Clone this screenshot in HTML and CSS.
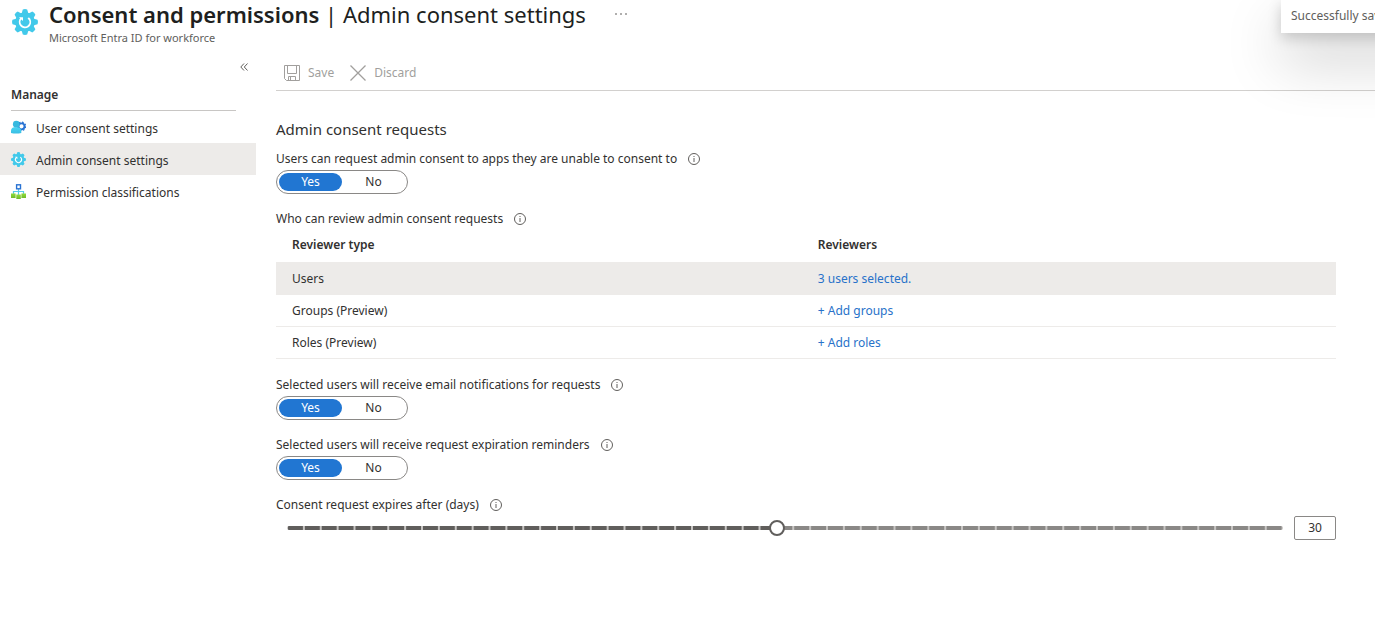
FILE: index.html
```html
<!DOCTYPE html>
<html lang="en">
<head>
<meta charset="utf-8">
<meta name="viewport" content="width=device-width, initial-scale=1">
<title>Consent and permissions | Admin consent settings</title>
<link rel="stylesheet" href="styles.css">
</head>
<body>
<svg class="defs" aria-hidden="true">
  <defs>
    <linearGradient id="cyan" x1="0" y1="0" x2="0" y2="1"><stop offset="0" stop-color="#48d5f3"/><stop offset="1" stop-color="#3abde3"/></linearGradient>
    <linearGradient id="green" x1="0" y1="0" x2="0" y2="1"><stop offset="0" stop-color="#92dc3a"/><stop offset="1" stop-color="#6fbb2b"/></linearGradient>
    <symbol id="gear" viewBox="0 0 26 26">
      <g fill="#42c9ea">
        <circle cx="13" cy="13" r="9.8"/>
        <path d="M9.500 5 10.800.5Q13-.4 15.200.5L16.500 5V21L15.200 25.500Q13 26.400 10.800 25.500L9.500 21Z"/>
        <path d="M5 9.500.5 10.800Q-.4 13 .5 15.200L5 16.500H21L25.500 15.200Q26.400 13 25.500 10.800L21 9.500Z"/>
        <path d="M9.500 5 10.800.5Q13-.4 15.200.5L16.500 5V21L15.200 25.500Q13 26.400 10.800 25.500L9.500 21Z" transform="rotate(45 13 13)"/>
        <path d="M9.500 5 10.800.5Q13-.4 15.200.5L16.500 5V21L15.200 25.500Q13 26.400 10.800 25.500L9.500 21Z" transform="rotate(-45 13 13)"/>
      </g>
      <path d="M9.300 9.200A5.300 5.300 0 1 0 17.600 10.400L16.200 9" fill="none" stroke="#fff" stroke-width="1.800"/>
      <path d="M7 8.200H11V12Z" fill="#fff"/>
    </symbol>
    <symbol id="info" viewBox="0 0 12 12">
      <circle cx="6" cy="6" r="5.500" fill="none" stroke="#605e5c"/>
      <path d="M6 5V9M6 3V4" stroke="#605e5c"/>
    </symbol>
  </defs>
</svg>
<div class="blade">
  <header class="blade-header">
    <svg class="blade-icon" aria-hidden="true"><use href="#gear"/></svg>
    <div class="blade-titles">
      <div class="title-row">
        <h1 class="title"><strong>Consent and permissions</strong> | Admin consent settings</h1>
        <button class="more" type="button" aria-label="More"><svg viewBox="0 0 12 4"><path d="M0 2h2M5 2h2M10 2h2" stroke="#605e5c"/></svg></button>
      </div>
      <p class="subtitle">Microsoft Entra ID for workforce</p>
    </div>
  </header>

  <div class="blade-body">
    <nav class="sidebar" aria-label="Manage">
      <button class="collapse" type="button" aria-label="Collapse menu"><svg viewBox="0 0 8 8"><path d="M4 .5.8 4 4 7.500M7.500.5 4.300 4 7.500 7.500" fill="none" stroke="#605e5c"/></svg></button>
      <h2 class="nav-heading">Manage</h2>
      <ul class="nav-list">
        <li><a class="nav-link" href="#user">
          <svg class="nav-icon" viewBox="0 0 15 15"><circle cx="10.500" cy="6.300" r="3" fill="none" stroke="#2872d3" stroke-width="1.800"/><circle cx="10.500" cy="6.300" r="4.200" fill="none" stroke="#2872d3" stroke-width="1.200" stroke-dasharray="1.700 1.600"/><path d="M0 13V10.500Q.3 7.400 3.300 7.200H7Q10 7.400 10.300 10.500V13Q5 14.200 0 13Z" fill="url(#cyan)"/><circle cx="5.300" cy="4.200" r="3.400" fill="#36b9df"/></svg>
          User consent settings</a></li>
        <li><a class="nav-link current" href="#admin" aria-current="page">
          <svg class="nav-icon"><use href="#gear"/></svg>
          Admin consent settings</a></li>
        <li><a class="nav-link" href="#classifications">
          <svg class="nav-icon" viewBox="0 0 15 15"><path d="M7.500 5V11M2.500 11V7.500H12.500V11" fill="none" stroke="#54cbea" stroke-width="1.200"/><rect x="5.600" y=".8" width="3.900" height="4" fill="#fff" stroke="#2872d3" stroke-width="1.400"/><g fill="url(#green)"><rect x="0" y="9.500" width="4.600" height="4.500"/><rect x="5.300" y="10.500" width="4.500" height="4.500"/><rect x="10.400" y="9.500" width="4.600" height="4.500"/></g></svg>
          Permission classifications</a></li>
      </ul>
    </nav>

    <main class="content">
      <div class="commands">
        <button class="command" type="button" disabled>
          <svg viewBox="0 0 16 16" fill="none" stroke="#a19f9d"><path d="M.5.5H15.500V15.500H2.500L.5 13.500ZM3.500.5V8.500H12.500V.5M4.500 15V11.500H11.500V15M6.500 12V15"/></svg>Save</button>
        <button class="command" type="button" disabled>
          <svg viewBox="0 0 16 16" fill="none" stroke="#a19f9d" stroke-width="1.300"><path d="M.5.5 15.500 15.500M15.500.5.5 15.500"/></svg>Discard</button>
      </div>

      <form class="settings">
        <h2 class="section-title">Admin consent requests</h2>

        <fieldset class="field">
          <legend class="label">Users can request admin consent to apps they are unable to consent to <svg class="info"><use href="#info"/></svg></legend>
          <div class="toggle">
            <label class="option"><input type="radio" name="request" checked><span>Yes</span></label>
            <label class="option"><input type="radio" name="request"><span>No</span></label>
          </div>
        </fieldset>

        <div class="reviewers">
          <p class="label" id="review-label">Who can review admin consent requests <svg class="info"><use href="#info"/></svg></p>
          <table class="table" aria-labelledby="review-label">
            <thead><tr><th>Reviewer type</th><th>Reviewers</th></tr></thead>
            <tbody>
              <tr class="selected"><td>Users</td><td><a href="#users">3 users selected.</a></td></tr>
              <tr><td>Groups (Preview)</td><td><a href="#groups">+ Add groups</a></td></tr>
              <tr><td>Roles (Preview)</td><td><a href="#roles">+ Add roles</a></td></tr>
            </tbody>
          </table>
        </div>

        <fieldset class="field">
          <legend class="label">Selected users will receive email notifications for requests <svg class="info"><use href="#info"/></svg></legend>
          <div class="toggle">
            <label class="option"><input type="radio" name="email" checked><span>Yes</span></label>
            <label class="option"><input type="radio" name="email"><span>No</span></label>
          </div>
        </fieldset>

        <fieldset class="field">
          <legend class="label">Selected users will receive request expiration reminders <svg class="info"><use href="#info"/></svg></legend>
          <div class="toggle">
            <label class="option"><input type="radio" name="reminders" checked><span>Yes</span></label>
            <label class="option"><input type="radio" name="reminders"><span>No</span></label>
          </div>
        </fieldset>

        <div class="expiry">
          <label class="label" for="days">Consent request expires after (days) <svg class="info"><use href="#info"/></svg></label>
          <div class="slider-row">
            <input class="slider" id="days" type="range" min="1" max="60" value="30" style="--fill: 49.150%">
            <input class="days" type="text" value="30" aria-label="Days">
          </div>
        </div>
      </form>
    </main>
  </div>
  <div class="toast" role="status">Successfully saved</div>
</div>
</body>
</html>
```
FILE: styles.css
```css
* { box-sizing: border-box; }

body {
  margin: 0;
  background: #fff;
  color: #323130;
  font: 12px/16px "Noto Sans", "Open Sans", sans-serif;
}

h1, h2, p, ul, fieldset, legend { margin: 0; padding: 0; }
ul { list-style: none; }
fieldset { border: 0; min-width: 0; }
button, input { font: inherit; color: inherit; }
button { padding: 0; border: 0; background: none; }
svg { flex: none; }
a { color: #2872c9; text-decoration: none; }

.defs { position: absolute; width: 0; height: 0; }

.blade {
  position: relative;
  min-height: 100vh;
  overflow: hidden;
}

.blade-header {
  display: flex;
  gap: 11px;
  padding-left: 12px;
}
.blade-icon { width: 26px; height: 26px; margin-top: 9px; }
.title-row { display: flex; align-items: center; gap: 29px; }
.title { color: #201f1e; font-size: 22px; line-height: 28px; font-weight: 400; white-space: nowrap; }
.title strong { font-weight: 600; }
.more svg { display: block; width: 12px; height: 4px; }
.subtitle { color: #605e5c; font-size: 11px; line-height: 20px; }

.blade-body { display: flex; gap: 20px; }

.sidebar { flex: none; width: 256px; padding-top: 14px; }
.collapse { display: block; margin: 0 8px 0 auto; }
.collapse svg { display: block; width: 8px; height: 10px; }
.nav-heading {
  margin: 15px 20px 0 11px;
  padding-bottom: 7px;
  border-bottom: 1px solid #c8c6c4;
  font-size: 12px;
  line-height: 16px;
  font-weight: 600;
}
.nav-link {
  display: flex;
  align-items: center;
  gap: 10px;
  height: 32px;
  padding: 3px 0 0 11px;
  color: #323130;
}
.nav-link.current { background: #edebe9; }
.nav-icon { width: 15px; height: 15px; margin-bottom: 2px; }

.content { flex: 1; min-width: 0; }
.commands {
  display: flex;
  gap: 16px;
  padding: 15px 8px 8px;
  border-bottom: 1px solid #d2d0ce;
}
.command { display: flex; align-items: center; gap: 8px; color: #a19f9d; line-height: 19px; }
.command svg { width: 16px; height: 16px; }

.settings { padding: 28px 39px 20px 0; }
.section-title { margin-bottom: 12px; font-size: 15px; line-height: 20px; font-weight: 400; }
.label { display: flex; align-items: center; gap: 11px; line-height: 16px; }
.info { width: 12px; height: 12px; }
.field { margin-bottom: 17px; }

.toggle {
  display: flex;
  width: 132px;
  height: 24px;
  margin-top: 3px;
  padding: 2px;
  border: 1px solid #8a8886;
  border-radius: 12px;
}
.option { position: relative; display: flex; flex: 1; }
.option input { position: absolute; inset: 0; margin: 0; opacity: 0; }
.option span {
  flex: 1;
  border-radius: 9px;
  line-height: 18px;
  text-align: center;
}
.option input:checked + span { background: #2176d2; color: #fff; }

.reviewers { margin-bottom: 18px; }
.table { width: 100%; border-collapse: collapse; table-layout: fixed; }
.table th { height: 35px; padding: 0 16px; font-weight: 600; text-align: left; }
.table th:first-child { width: 49.6%; }
.table td { height: 32px; padding: 2px 16px 0; border-bottom: 1px solid #edebe9; }
.selected { background: #edebe9; }

.slider-row {
  display: flex;
  align-items: center;
  gap: 11px;
  margin-top: 3px;
  padding-left: 11px;
}
.slider {
  flex: 1;
  min-width: 0;
  height: 16px;
  margin: 0;
  appearance: none;
  background: none;
}
.slider::-webkit-slider-runnable-track {
  height: 4px;
  border-radius: 2px;
  background:
    linear-gradient(to right, transparent calc(100% - 2px), #c8c6c4 0) 1px 0 / calc(100% / 59) 100%,
    linear-gradient(to right, #605e5c var(--fill), #8a8886 0);
}
.slider::-webkit-slider-thumb {
  appearance: none;
  width: 16px;
  height: 16px;
  margin-top: -6px;
  border: 2px solid #605e5c;
  border-radius: 50%;
  background: #fff;
}
.days {
  width: 42px;
  height: 24px;
  padding: 0;
  border: 1px solid #8a8886;
  border-radius: 2px;
  text-align: center;
}

.toast {
  position: absolute;
  top: 0;
  left: calc(100% - 94px);
  width: 320px;
  padding: 8px 10px 9px;
  background: #fff;
  color: #605e5c;
  white-space: nowrap;
  box-shadow: 0 26px 58px rgba(0, 0, 0, .22), 0 5px 14px rgba(0, 0, 0, .18);
}
```
